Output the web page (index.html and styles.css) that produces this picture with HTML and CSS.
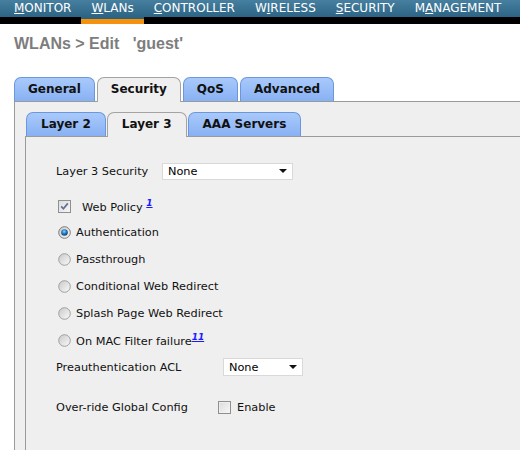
FILE: index.html
```html
<!DOCTYPE html>
<html>
<head>
<meta charset="utf-8">
<link rel="stylesheet" href="styles.css">
</head>
<body>
<div class="nav">
  <a class="nav-item"><u>M</u>ONITOR</a>
  <a class="nav-item active"><u>W</u>LANs</a>
  <a class="nav-item"><u>C</u>ONTROLLER</a>
  <a class="nav-item">W<u>I</u>RELESS</a>
  <a class="nav-item"><u>S</u>ECURITY</a>
  <a class="nav-item">M<u>A</u>NAGEMENT</a>
</div>
<h1 class="title">WLANs &gt; Edit &nbsp; 'guest'</h1>
<div class="tabs outer-tabs">
  <div class="tab">General</div>
  <div class="tab active">Security</div>
  <div class="tab">QoS</div>
  <div class="tab">Advanced</div>
</div>
<div class="panel outer-panel">
  <div class="tabs inner-tabs">
    <div class="tab">Layer 2</div>
    <div class="tab active">Layer 3</div>
    <div class="tab">AAA Servers</div>
  </div>
  <div class="panel inner-panel">
    <div class="row row-l3">
      <span class="label l3-label">Layer 3 Security</span>
      <span class="select sel-l3"><span class="sel-text">None</span><span class="arrow"></span></span>
    </div>
    <div class="row row-web">
      <svg class="box" width="13" height="13" viewBox="0 0 13 13"><defs><linearGradient id="cbg" x1="0" y1="0" x2="1" y2="1"><stop offset="0" stop-color="#dcdcdc"/><stop offset="1" stop-color="#f6f6f6"/></linearGradient></defs><rect x="0.5" y="0.5" width="12" height="12" fill="url(#cbg)" stroke="#8e8f8f"/><path d="M3.2 6.4 L5.4 8.8 L9.8 3.4" fill="none" stroke="#5f6f9a" stroke-width="1.7"/></svg>
      <span class="web-text">Web Policy <a class="fn">1</a></span>
    </div>
    <div class="row row-radio row-first">
      <svg class="radio" width="13" height="13" viewBox="0 0 13 13"><defs><radialGradient id="rsel" cx="0.45" cy="0.35" r="0.6"><stop offset="0" stop-color="#8fd0f5"/><stop offset="0.6" stop-color="#1f73b8"/><stop offset="1" stop-color="#0d4a82"/></radialGradient><linearGradient id="rbg" x1="0" y1="0" x2="1" y2="1"><stop offset="0" stop-color="#c8c8c8"/><stop offset="1" stop-color="#fbfbfb"/></linearGradient></defs><circle cx="6.5" cy="6.5" r="5.8" fill="url(#rbg)" stroke="#6f6f6f" stroke-width="0.9"/><circle cx="6.5" cy="6.5" r="3.3" fill="url(#rsel)"/></svg>
      <span class="radio-text">Authentication</span>
    </div>
    <div class="row row-radio">
      <svg class="radio" width="13" height="13" viewBox="0 0 13 13"><circle cx="6.5" cy="6.5" r="5.8" fill="url(#rbg)" stroke="#979797" stroke-width="0.9"/></svg>
      <span class="radio-text">Passthrough</span>
    </div>
    <div class="row row-radio">
      <svg class="radio" width="13" height="13" viewBox="0 0 13 13"><circle cx="6.5" cy="6.5" r="5.8" fill="url(#rbg)" stroke="#979797" stroke-width="0.9"/></svg>
      <span class="radio-text">Conditional Web Redirect</span>
    </div>
    <div class="row row-radio">
      <svg class="radio" width="13" height="13" viewBox="0 0 13 13"><circle cx="6.5" cy="6.5" r="5.8" fill="url(#rbg)" stroke="#979797" stroke-width="0.9"/></svg>
      <span class="radio-text">Splash Page Web Redirect</span>
    </div>
    <div class="row row-radio">
      <svg class="radio" width="13" height="13" viewBox="0 0 13 13"><circle cx="6.5" cy="6.5" r="5.8" fill="url(#rbg)" stroke="#979797" stroke-width="0.9"/></svg>
      <span class="radio-text">On MAC Filter failure<a class="fn fn-tight">11</a></span>
    </div>
    <div class="row row-acl">
      <span class="label acl-label">Preauthentication ACL</span>
      <span class="select sel-acl"><span class="sel-text">None</span><span class="arrow"></span></span>
    </div>
    <div class="row row-over">
      <span class="label over-label">Over-ride Global Config</span>
      <svg class="box-plain" width="13" height="13" viewBox="0 0 13 13"><rect x="0.5" y="0.5" width="12" height="12" fill="#f4f4f4" stroke="#8e8f8f"/><rect x="1.5" y="1.5" width="10" height="10" fill="url(#cbg)" stroke="#f0f0f0" stroke-width="0.5"/></svg>
      <span class="enable">Enable</span>
    </div>
  </div>
</div>
</body>
</html>
```

FILE: styles.css
```css
html, body {
  margin: 0;
  padding: 0;
  background: #ffffff;
}
body {
  width: 520px;
  height: 450px;
  overflow: hidden;
  display: flex;
  flex-direction: column;
  font-family: "DejaVu Sans", Verdana, sans-serif;
}
.nav {
  display: flex;
  height: 24px;
  padding-left: 4px;
  background: linear-gradient(to bottom, #467f9f 0px, #2d6485 17px, #000 17px, #000 24px);
  white-space: nowrap;
  flex: none;
}
.nav-item {
  display: block;
  padding: 0 10px;
  height: 19px;
  line-height: 17px;
  font-size: 12px;
  color: #ffffff;
}
.nav-item u {
  text-decoration: underline;
}
.nav-item.active {
  background: linear-gradient(to bottom, #467f9f 0px, #2d6485 17px, #2b6282 19px);
  border-bottom: 5px solid #f5920d;
}
.title {
  margin: 11px 0 0 14px;
  font-family: "Liberation Sans", Arial, sans-serif;
  font-size: 16px;
  line-height: 18px;
  font-weight: bold;
  color: #7d7d7d;
  flex: none;
}
.tabs {
  display: flex;
  align-items: flex-end;
  flex: none;
}
.outer-tabs {
  margin: 24px 0 0 14px;
  gap: 2px;
}
.inner-tabs {
  margin: 10px 0 0 1px;
  gap: 1px;
}
.tab {
  height: 23px;
  line-height: 23px;
  padding: 0 13px;
  font-size: 12px;
  font-weight: bold;
  color: #111;
  border: 1px solid #6b98dc;
  border-bottom: none;
  border-radius: 7px 7px 0 0;
  background: linear-gradient(to bottom, #a9c9fb, #88b1f3);
}
.inner-tabs .tab {
  padding: 0 14px;
}
.tab.active {
  background: #efefef;
  border-color: #a3a3a3;
  position: relative;
  z-index: 1;
  margin-bottom: -1px;
  padding-bottom: 1px;
}
.panel {
  background: #efefef;
  border-top: 1px solid #9a9a9a;
  border-left: 1px solid #9a9a9a;
}
.outer-panel {
  flex: 1;
  margin-left: 14px;
  padding-left: 10px;
  display: flex;
  flex-direction: column;
}
.inner-panel {
  flex: 1;
  padding-left: 30px;
  font-size: 11.3px;
  color: #111;
}
.row {
  display: flex;
  align-items: center;
  height: 20px;
  white-space: nowrap;
}
.row-l3 { margin-top: 24px; }
.row-web { margin-top: 15px; }
.row-radio { margin-top: 7px; }
.row-radio.row-first { margin-top: 6px; }
.row-acl { margin-top: 7px; }
.row-over { margin-top: 20px; }
.l3-label { width: 106px; }
.acl-label { width: 167px; }
.over-label { width: 162px; }
.select {
  display: flex;
  align-items: center;
  justify-content: space-between;
  box-sizing: border-box;
  background: #fff;
  border: 1px solid #d9d9d9;
  padding: 0 5px 0 5px;
  color: #000;
}
.sel-l3 { width: 131px; height: 17px; }
.sel-acl { width: 80px; height: 18px; }
.arrow {
  width: 0;
  height: 0;
  border-left: 4px solid transparent;
  border-right: 4px solid transparent;
  border-top: 4px solid #111;
}
.box {
  margin-left: 2px;
  flex: none;
}
.web-text { margin-left: 11px; }
.radio {
  margin-left: 2px;
  flex: none;
}
.radio-text { margin-left: 5px; }
.fn {
  font-size: 9px;
  font-weight: bold;
  font-style: italic;
  color: #1a1aff;
  text-decoration: underline;
  vertical-align: 5px;
}
.box-plain { flex: none; }
.enable { margin-left: 6px; }
```
